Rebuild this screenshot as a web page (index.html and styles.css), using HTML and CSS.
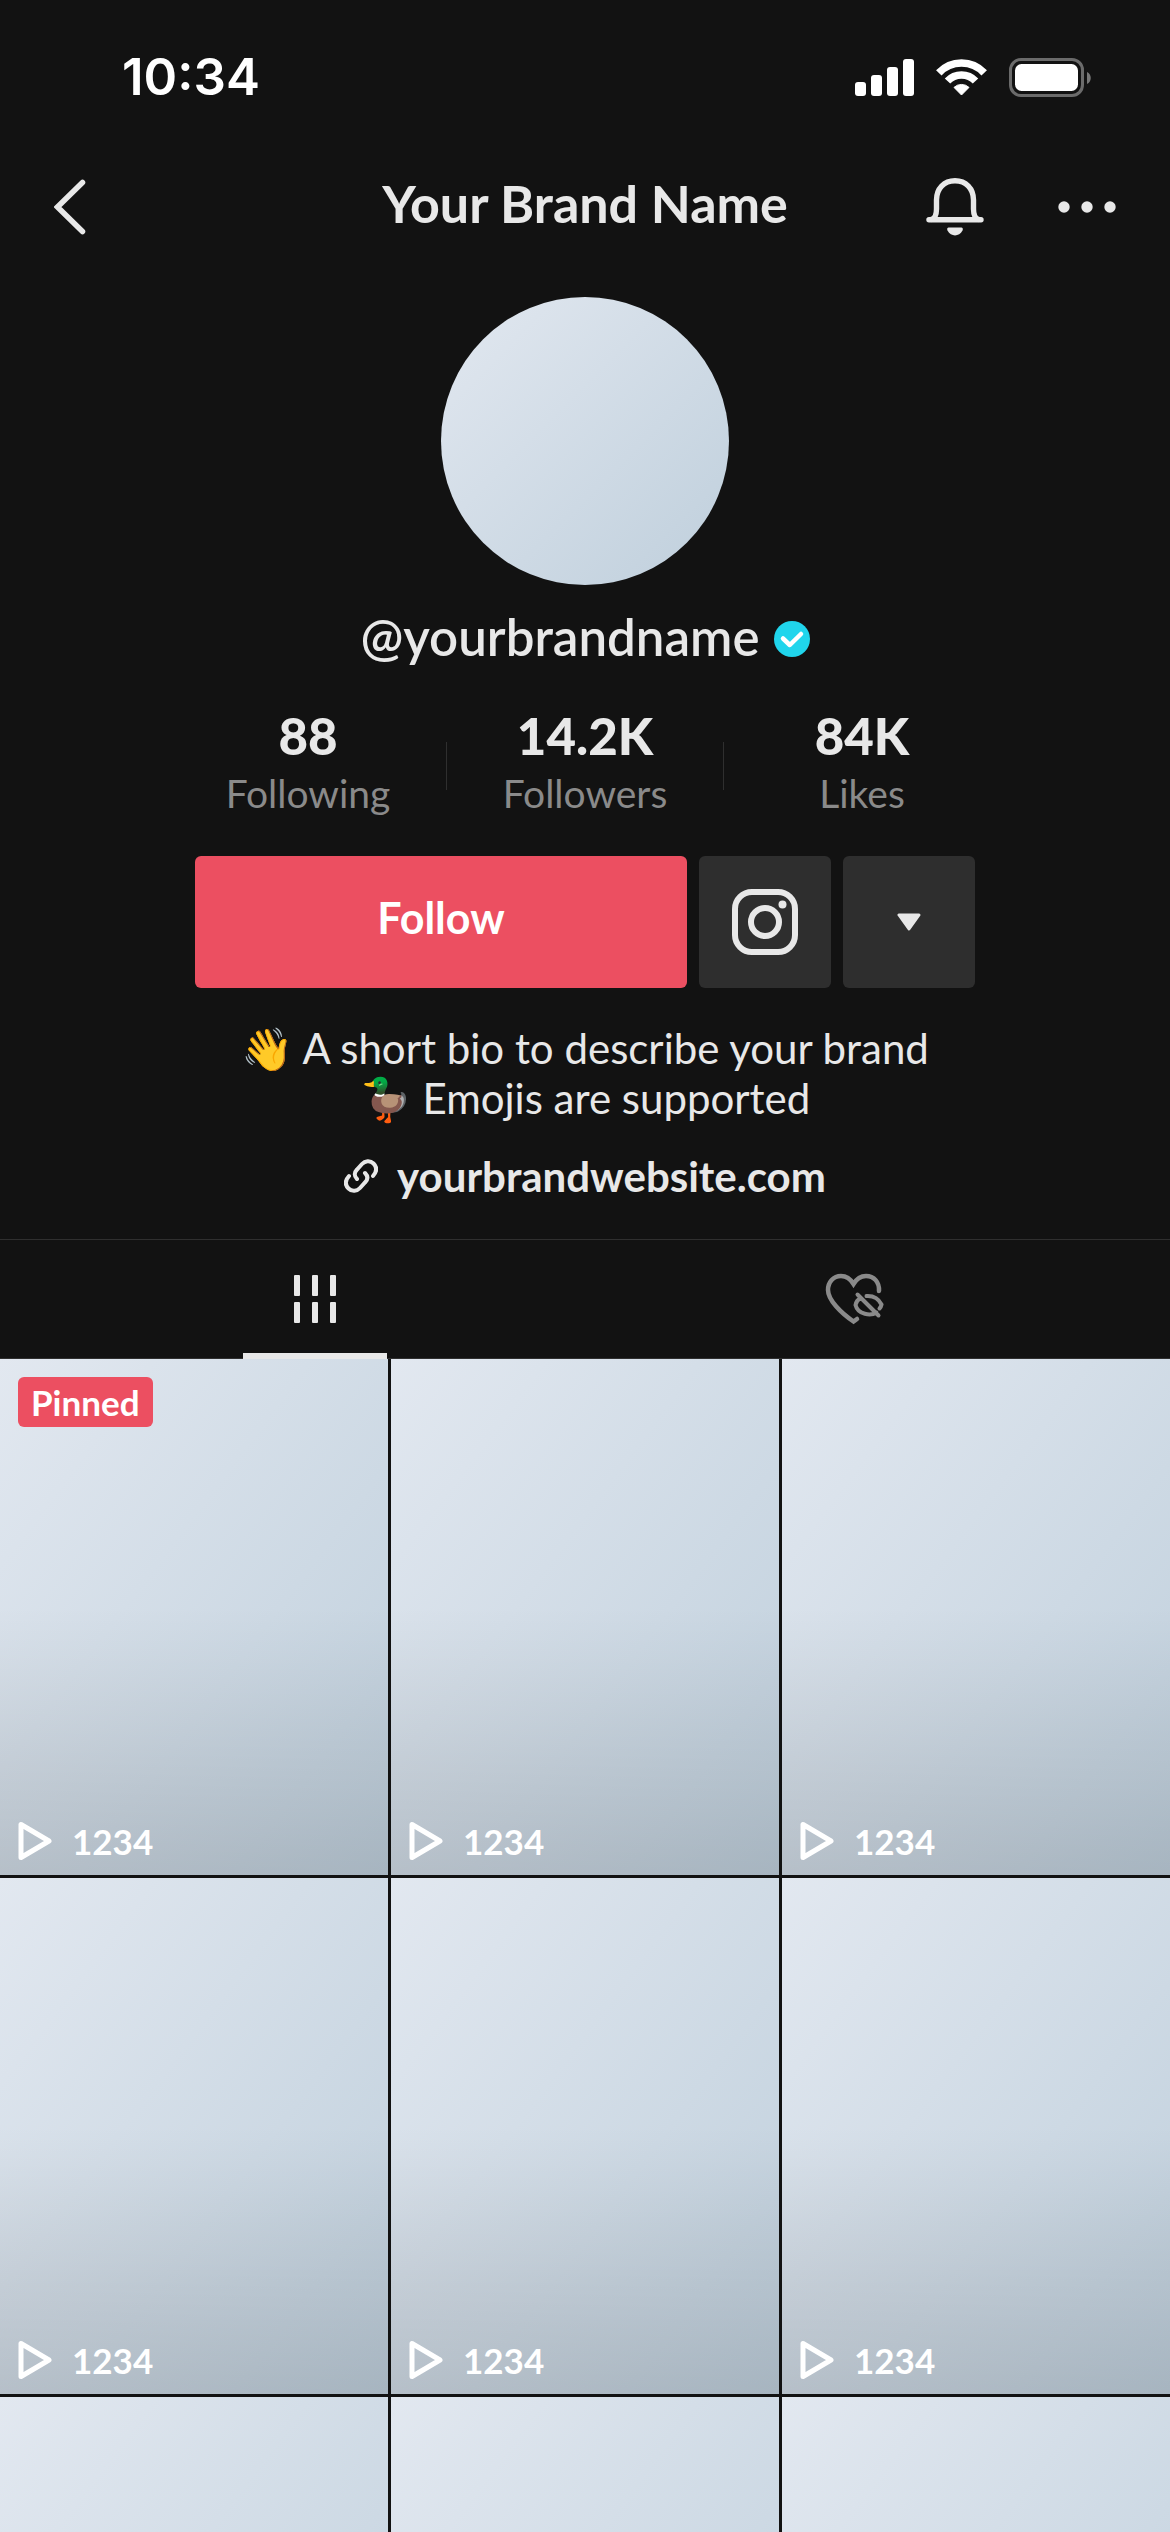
FILE: index.html
```html
<!DOCTYPE html>
<html lang="en">
<head>
<meta charset="utf-8">
<meta name="viewport" content="width=device-width, initial-scale=1">
<title>Your Brand Name</title>
<link rel="stylesheet" href="styles.css">
</head>
<body>
<div class="status">
  <time class="status-time">10:34</time>
  <div class="status-icons">
    <svg width="59" height="37" viewBox="0 0 59 37" fill="#fff" aria-hidden="true"><rect y="23" width="11" height="14" rx="3"/><rect x="16" y="16" width="11" height="21" rx="3"/><rect x="32" y="8" width="11" height="29" rx="3"/><rect x="48" width="11" height="37" rx="3"/></svg>
    <svg width="51" height="37" viewBox="0 0 51 37" fill="none" stroke="#fff" stroke-width="7.5" aria-hidden="true"><path d="M2.8 13.9A31 31 0 0 1 48.2 13.9M11.5 22A19.2 19.2 0 0 1 39.5 22"/><path d="M25.5 36L18 28.4A11 11 0 0 1 33 28.4Z" fill="#fff" stroke-width="1" stroke-linejoin="round"/></svg>
    <svg width="83" height="39" viewBox="0 0 83 39" aria-hidden="true"><rect x="1.5" y="1.5" width="72" height="36" rx="10.5" fill="none" stroke="#6b6b6b" stroke-width="3"/><rect x="6" y="6" width="63" height="27" rx="6.5" fill="#fff"/><path d="M78 14c5 2 5 10 0 12z" fill="#777"/></svg>
  </div>
</div>

<header class="nav">
  <button class="icon-btn" type="button" aria-label="Back">
    <svg width="32" height="56" viewBox="0 0 32 56" fill="none" stroke="#e8e8e8" stroke-width="5.500" stroke-linecap="round"><path d="M28.500 3.500L3.500 28L28.500 52.500"/></svg>
  </button>
  <h1 class="nav-title">Your Brand Name</h1>
  <div class="nav-actions">
    <button class="icon-btn" type="button" aria-label="Notifications">
      <svg width="58" height="58" viewBox="0 0 58 58"><path d="M5 41.700C9.500 40.500 10.500 36 10.500 31V22C10.500 10.500 18 2.800 29 2.800S47.500 10.500 47.500 22V31C47.500 36 48.500 40.500 53 41.700" fill="none" stroke="#e8e8e8" stroke-width="5.400"/><path d="M3 41.700H55" stroke="#e8e8e8" stroke-width="5.400" stroke-linecap="round"/><path d="M22.500 49.500H35.500Q37.500 50 36.500 52.500C33 59 25 59 21.500 52.500Q20.500 50 22.500 49.500Z" fill="#e8e8e8"/></svg>
    </button>
    <button class="icon-btn" type="button" aria-label="More">
      <svg width="58" height="12" viewBox="0 0 58 12" fill="#e8e8e8"><circle cx="6" cy="6" r="5.700"/><circle cx="29" cy="6" r="5.700"/><circle cx="52" cy="6" r="5.700"/></svg>
    </button>
  </div>
</header>

<main class="main">
  <section class="profile">
    <div class="avatar"></div>
    <div class="handle">
      <span>@yourbrandname</span>
      <svg class="verified" width="36" height="36" viewBox="0 0 36 36" role="img" aria-label="Verified"><circle cx="18" cy="18" r="18" fill="#20d5ec"/><path d="M9 17.500L15.800 24L27 13" fill="none" stroke="#fff" stroke-width="4.500" stroke-linecap="round" stroke-linejoin="round"/></svg>
    </div>
    <div class="stats">
      <div class="stat"><strong>88</strong><span>Following</span></div>
      <div class="divider"></div>
      <div class="stat"><strong>14.2K</strong><span>Followers</span></div>
      <div class="divider"></div>
      <div class="stat"><strong>84K</strong><span>Likes</span></div>
    </div>
    <div class="actions">
      <button class="follow" type="button">Follow</button>
      <button class="square" type="button" aria-label="Instagram">
        <svg width="66" height="66" viewBox="0 0 66 66" fill="none" stroke="#e8e8e8" stroke-width="6"><rect x="3" y="3" width="60" height="60" rx="17"/><circle cx="33" cy="33" r="14"/><circle cx="50.500" cy="15.500" r="4" fill="#e8e8e8" stroke="none"/></svg>
      </button>
      <button class="square" type="button" aria-label="Suggested accounts">
        <svg width="24" height="18" viewBox="0 0 24 18"><path d="M2 2H22L12 16Z" fill="#e8e8e8" stroke="#e8e8e8" stroke-width="3" stroke-linejoin="round"/></svg>
      </button>
    </div>
    <p class="bio">👋 A short bio to describe your brand<br>🦆 Emojis are supported</p>
    <a class="site" href="#">
      <svg width="34" height="34" viewBox="0 0 34 34" fill="none" stroke="#e8e8e8" stroke-width="4" stroke-linecap="round" aria-hidden="true"><path d="M13 20C10 17 10 13.500 13 10.500L18 5C21 1.700 26 1 29.500 4.500C33 8 33 12.500 29 17M21 14C24 17 24 20.500 21 23.500L16 29C13 32.300 8 33 4.500 29.500C1 26 1 21.500 5 17"/></svg>
      yourbrandwebsite.com
    </a>
  </section>

  <nav class="tabs">
    <button class="tab tab-active" type="button" aria-label="Videos">
      <svg width="44" height="48" viewBox="0 0 44 48" fill="#e8e8e8"><rect x="1" width="6" height="21" rx="1"/><rect x="19" width="6" height="21" rx="1"/><rect x="37" width="6" height="21" rx="1"/><rect x="1" y="27" width="6" height="21" rx="1"/><rect x="19" y="27" width="6" height="21" rx="1"/><rect x="37" y="27" width="6" height="21" rx="1"/></svg>
    </button>
    <button class="tab" type="button" aria-label="Liked videos, hidden">
      <svg width="62" height="58" viewBox="44 39 62 58" fill="none" stroke="#8a8a8a" stroke-width="4" stroke-linecap="round"><path d="M99 60C99.500 51 94 45 86 45C80.500 45 76.500 48 73.500 53C70.500 48 66.500 45 61 45C53.500 45 48 51 48 59C48 69 61 82 73.500 90.500L77 88" stroke-width="4.500"/><path d="M86.500 65C94 64.500 99 68.500 101.500 73.500Q101 76 99.500 77.500M80.500 67C78 68.500 76 71 75.500 74C78 84 91 85 96.500 81.500M77.500 63.500L98.500 84.500"/></svg>
    </button>
  </nav>

  <section class="grid" aria-label="Videos">
    <a class="tile" href="#"><span class="pinned">Pinned</span><span class="plays"><svg width="34" height="40" viewBox="0 0 34 40" class="play"><path d="M3 3.500V36.500L31 20Z"/></svg>1234</span></a>
    <a class="tile" href="#"><span class="plays"><svg width="34" height="40" viewBox="0 0 34 40" class="play"><path d="M3 3.500V36.500L31 20Z"/></svg>1234</span></a>
    <a class="tile" href="#"><span class="plays"><svg width="34" height="40" viewBox="0 0 34 40" class="play"><path d="M3 3.500V36.500L31 20Z"/></svg>1234</span></a>
    <a class="tile" href="#"><span class="plays"><svg width="34" height="40" viewBox="0 0 34 40" class="play"><path d="M3 3.500V36.500L31 20Z"/></svg>1234</span></a>
    <a class="tile" href="#"><span class="plays"><svg width="34" height="40" viewBox="0 0 34 40" class="play"><path d="M3 3.500V36.500L31 20Z"/></svg>1234</span></a>
    <a class="tile" href="#"><span class="plays"><svg width="34" height="40" viewBox="0 0 34 40" class="play"><path d="M3 3.500V36.500L31 20Z"/></svg>1234</span></a>
    <a class="tile" href="#" aria-label="Video"></a>
    <a class="tile" href="#" aria-label="Video"></a>
    <a class="tile" href="#" aria-label="Video"></a>
  </section>
</main>
</body>
</html>
```
FILE: styles.css
```css
* { box-sizing: border-box; }

body {
  margin: 0;
  height: 100vh;
  display: flex;
  flex-direction: column;
  overflow: hidden;
  background: #121212;
  color: #e8e8e8;
  font-family: Lato, "Open Sans", sans-serif;
}

svg { display: block; flex: none; }

button {
  margin: 0;
  padding: 0;
  border: 0;
  background: none;
  color: inherit;
  font-family: inherit;
  cursor: pointer;
}

a { color: inherit; text-decoration: none; }

/* Status bar */
.status {
  flex: none;
  height: 154px;
  padding: 0 78px 0 122px;
  display: flex;
  align-items: center;
  justify-content: space-between;
  color: #fff;
}
.status-time { font: 600 51px/60px Inter, sans-serif; }
.status-icons { display: flex; align-items: center; gap: 22px; }

/* Header */
.nav {
  flex: none;
  height: 106px;
  padding: 0 54px;
  display: grid;
  grid-template-columns: 1fr auto 1fr;
  align-items: center;
}
.nav-title {
  margin: 0;
  padding-bottom: 8px;
  font-size: 52px;
  line-height: 60px;
  font-weight: 700;
}
.nav-actions { display: flex; justify-content: flex-end; align-items: center; gap: 74px; }
.icon-btn { justify-self: start; }

.main {
  flex: 1;
  min-height: 0;
  display: flex;
  flex-direction: column;
}

/* Profile */
.profile {
  flex: none;
  padding: 37px 0 39px;
  display: flex;
  flex-direction: column;
  align-items: center;
}
.avatar {
  width: 288px;
  height: 288px;
  border-radius: 50%;
  background: linear-gradient(to bottom right, #e2e8f0, #bfcfdc);
}
.handle {
  margin-top: 22px;
  display: flex;
  align-items: center;
  gap: 14px;
  font-size: 51px;
  line-height: 60px;
  font-weight: 600;
}
.verified { margin-top: 4px; }

.stats { margin-top: 40px; display: flex; align-items: center; }
.stat {
  width: 276px;
  display: flex;
  flex-direction: column;
  align-items: center;
  gap: 4px;
}
.stat strong { font-size: 51px; line-height: 58px; font-weight: 900; }
.stat span { font-size: 39px; line-height: 48px; color: #8a8a8a; }
.divider { width: 1px; height: 48px; margin-top: 8px; background: #2f2f2f; }

.actions { margin-top: 39px; display: flex; gap: 12px; }
.follow, .square { height: 132px; border-radius: 6px; }
.follow {
  width: 492px;
  padding-bottom: 8px;
  background: #ec4f61;
  color: #fff;
  font-size: 43px;
  line-height: 50px;
  font-weight: 700;
}
.square {
  width: 132px;
  display: flex;
  align-items: center;
  justify-content: center;
  background: #2e2e2e;
}

.bio {
  margin: 35px 0 0;
  text-align: center;
  font-size: 42px;
  line-height: 50px;
}
.site {
  margin-top: 28px;
  display: flex;
  align-items: center;
  gap: 19px;
  font-size: 42px;
  line-height: 50px;
  font-weight: 700;
}
.profile { padding-bottom: 38px; }

/* Tabs */
.tabs {
  flex: none;
  height: 120px;
  padding: 0 45px;
  display: flex;
  border-top: 1px solid #2f2f2f;
  border-bottom: 1px solid #2f2f2f;
}
.tab {
  position: relative;
  flex: 1;
  display: flex;
  align-items: center;
  justify-content: center;
}
.tab-active::after {
  content: "";
  position: absolute;
  left: 50%;
  bottom: -1px;
  width: 144px;
  height: 6px;
  margin-left: -72px;
  background: #e8e8e8;
}

/* Video grid */
.grid {
  flex: 1;
  min-height: 0;
  overflow: hidden;
  display: grid;
  grid-template-columns: repeat(3, 1fr);
  align-content: start;
  gap: 3px;
}
.tile {
  aspect-ratio: 388 / 516;
  padding: 18px 18px 14px;
  display: flex;
  flex-direction: column;
  align-items: flex-start;
  background:
    linear-gradient(transparent 48%, rgba(0, 0, 0, .13)),
    linear-gradient(to bottom right, #e2e8f0, #bfcfdc);
}
.pinned {
  padding: 0 13px;
  border-radius: 6px;
  background: #ec4f61;
  color: #fff;
  font-size: 35px;
  line-height: 50px;
  font-weight: 700;
}
.plays {
  margin-top: auto;
  display: flex;
  align-items: center;
  gap: 20px;
  color: #fff;
  font-size: 35px;
  line-height: 40px;
  font-weight: 700;
}
.play { fill: none; stroke: #fff; stroke-width: 5; stroke-linejoin: round; }
```
